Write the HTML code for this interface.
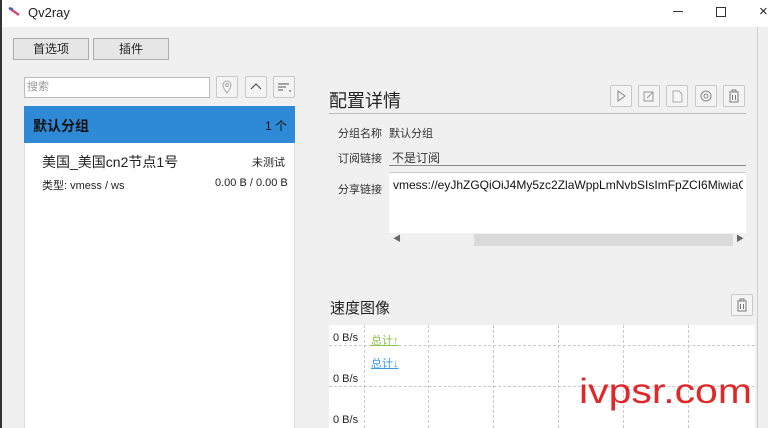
<!DOCTYPE html>
<html><head><meta charset="utf-8"><style>
*{margin:0;padding:0;box-sizing:border-box}
body{width:768px;height:428px;overflow:hidden;background:#f0f0f0;font-family:"Liberation Sans","Noto Sans CJK SC",sans-serif;position:relative;color:#222}
.a{position:absolute}
.btn{position:absolute;background:#e6e6e6;border:1px solid #adadad;font-size:12px;text-align:center;line-height:20px}
.ib{position:absolute;width:22px;height:22px;border:1px solid #c8c8c8;background:#f4f4f4;border-radius:2px}
.lbl{font-size:11px;color:#333}
.vl{position:absolute;top:325px;height:103px;border-left:1px dashed #c8c8c8}
.hl{position:absolute;left:329px;width:426px;border-top:1px dashed #c8c8c8}
</style></head><body>
<div class="a" style="left:0;top:0;width:2px;height:428px;background:#333"></div>
<div class="a" style="left:2px;top:0;width:766px;height:27px;background:#fff"></div>
<svg class="a" style="left:8px;top:6px" width="14" height="12"><path d="M1 2 L11 9" stroke="#d04a7a" stroke-width="2.5"/><path d="M1 2 L5 3" stroke="#3a6ad0" stroke-width="2"/></svg>
<div class="a" style="left:28px;top:5px;font-size:13px">Qv2ray</div>
<div class="a" style="left:673px;top:11px;width:10px;border-top:1px solid #333"></div>
<div class="a" style="left:716px;top:7px;width:10px;height:10px;border:1px solid #333"></div>
<div class="a" style="left:759px;top:3px;font-size:15px">×</div>
<div class="btn" style="left:13px;top:38px;width:76px;height:22px">首选项</div>
<div class="btn" style="left:93px;top:38px;width:76px;height:22px">插件</div>
<div class="a" style="left:24px;top:77px;width:186px;height:21px;background:#fff;border:1px solid #bbb;font-size:11px;color:#999;padding:2px 2px;line-height:15px">搜索</div>
<div class="ib" style="left:216px;top:76px"><svg width="20" height="20"><path d="M10 4a4 4 0 0 1 4 4c0 3-4 8-4 8s-4-5-4-8a4 4 0 0 1 4-4z" fill="none" stroke="#aaa"/><circle cx="10" cy="8" r="1.5" fill="none" stroke="#aaa"/></svg></div>
<div class="ib" style="left:245px;top:76px"><svg width="20" height="20"><path d="M5 12 L10 7 L15 12" fill="none" stroke="#555" stroke-width="1.2"/></svg></div>
<div class="ib" style="left:273px;top:76px"><svg width="20" height="20"><path d="M4 7h11M4 10h8M4 13h5M15 14h2" stroke="#555"/></svg></div>
<div class="a" style="left:24px;top:106px;width:271px;height:322px;background:#fff;border-left:1px solid #ddd;border-right:1px solid #ddd"></div>
<div class="a" style="left:24px;top:106px;width:271px;height:37px;background:#2e8ad6"></div>
<div class="a" style="left:33px;top:116px;font-size:14px;font-weight:bold;color:#111">默认分组</div>
<div class="a" style="left:265px;top:117px;font-size:12px;color:#111">1 个</div>
<div class="a" style="left:42px;top:152px;font-size:14px">美国_美国cn2节点1号</div>
<div class="a" style="left:252px;top:154px;font-size:11px">未测试</div>
<div class="a" style="left:42px;top:177px;font-size:11px">类型: vmess / ws</div>
<div class="a" style="left:215px;top:177px;font-size:11px">0.00 B / 0.00 B</div>
<div class="a" style="left:757px;top:27px;width:1px;height:401px;background:#ccc"></div>
<div class="a" style="left:329px;top:87px;font-size:18px;color:#222">配置详情</div>
<div class="ib" style="left:610px;top:85px"><svg width="20" height="20"><path d="M7 5 L14 10 L7 15Z" fill="none" stroke="#888"/></svg></div>
<div class="ib" style="left:638px;top:85px"><svg width="20" height="20"><rect x="5" y="6" width="9" height="9" fill="none" stroke="#999"/><path d="M8 12 L14 6" stroke="#999"/></svg></div>
<div class="ib" style="left:666px;top:85px"><svg width="20" height="20"><path d="M6 5h6l3 3v8H6z" fill="none" stroke="#aaa"/></svg></div>
<div class="ib" style="left:695px;top:85px"><svg width="20" height="20"><circle cx="10" cy="10" r="5" fill="none" stroke="#888"/><circle cx="10" cy="10" r="2" fill="none" stroke="#888"/></svg></div>
<div class="ib" style="left:723px;top:85px"><svg width="20" height="20"><path d="M5 6h10M8 6V4h4v2M6 7v9h8V7M8.5 9v5M11.5 9v5" fill="none" stroke="#777"/></svg></div>
<div class="a" style="left:329px;top:113px;width:417px;border-top:1px solid #bbb"></div>
<div class="a lbl" style="left:338px;top:125px">分组名称</div>
<div class="a lbl" style="left:389px;top:125px">默认分组</div>
<div class="a lbl" style="left:338px;top:150px">订阅链接</div>
<div class="a lbl" style="left:392px;top:149px;font-size:12px">不是订阅</div>
<div class="a" style="left:389px;top:165px;width:357px;border-top:1px solid #888"></div>
<div class="a lbl" style="left:338px;top:181px">分享链接</div>
<div class="a" style="left:389px;top:172px;width:357px;height:75px;background:#fff;border-top:1px solid #ccc"></div>
<div class="a" style="left:393px;top:178px;font-size:12px;white-space:nowrap;width:350px;overflow:hidden;color:#111">vmess://eyJhZGQiOiJ4My5zc2ZlaWppLmNvbSIsImFpZCI6MiwiaG</div>
<div class="a" style="left:389px;top:233px;width:357px;height:14px;background:#f0f0f0"></div>
<div class="a" style="left:474px;top:234px;width:259px;height:12px;background:#dadada"></div>
<div class="a" style="left:393px;top:233px;font-size:8px;color:#666">◀</div>
<div class="a" style="left:736px;top:233px;font-size:8px;color:#666">▶</div>
<div class="a" style="left:330px;top:297px;font-size:15px">速度图像</div>
<div class="ib" style="left:731px;top:294px"><svg width="20" height="20"><path d="M5 6h10M8 6V4h4v2M6 7v9h8V7M8.5 9v5M11.5 9v5" fill="none" stroke="#777"/></svg></div>
<div class="a" style="left:329px;top:325px;width:426px;height:103px;background:#fff"></div>
<div class="vl" style="left:364px"></div><div class="vl" style="left:428px"></div><div class="vl" style="left:493px"></div><div class="vl" style="left:558px"></div><div class="vl" style="left:623px"></div><div class="vl" style="left:688px"></div>
<div class="hl" style="top:345px"></div><div class="hl" style="top:386px"></div>
<div class="a" style="left:333px;top:332px;font-size:11px">0 B/s</div>
<div class="a" style="left:333px;top:373px;font-size:11px">0 B/s</div>
<div class="a" style="left:333px;top:414px;font-size:11px">0 B/s</div>
<div class="a" style="left:371px;top:332px;font-size:11px;color:#8bc34a;text-decoration:underline">总计↑</div>
<div class="a" style="left:371px;top:355px;font-size:11px;color:#3a9ae0;text-decoration:underline">总计↓</div>
<div class="a" style="left:579px;top:372px;font-size:35px;color:#e0282a;line-height:40px;transform:scaleX(1.17);transform-origin:left top;white-space:nowrap">ivpsr.com</div>
</body></html>
